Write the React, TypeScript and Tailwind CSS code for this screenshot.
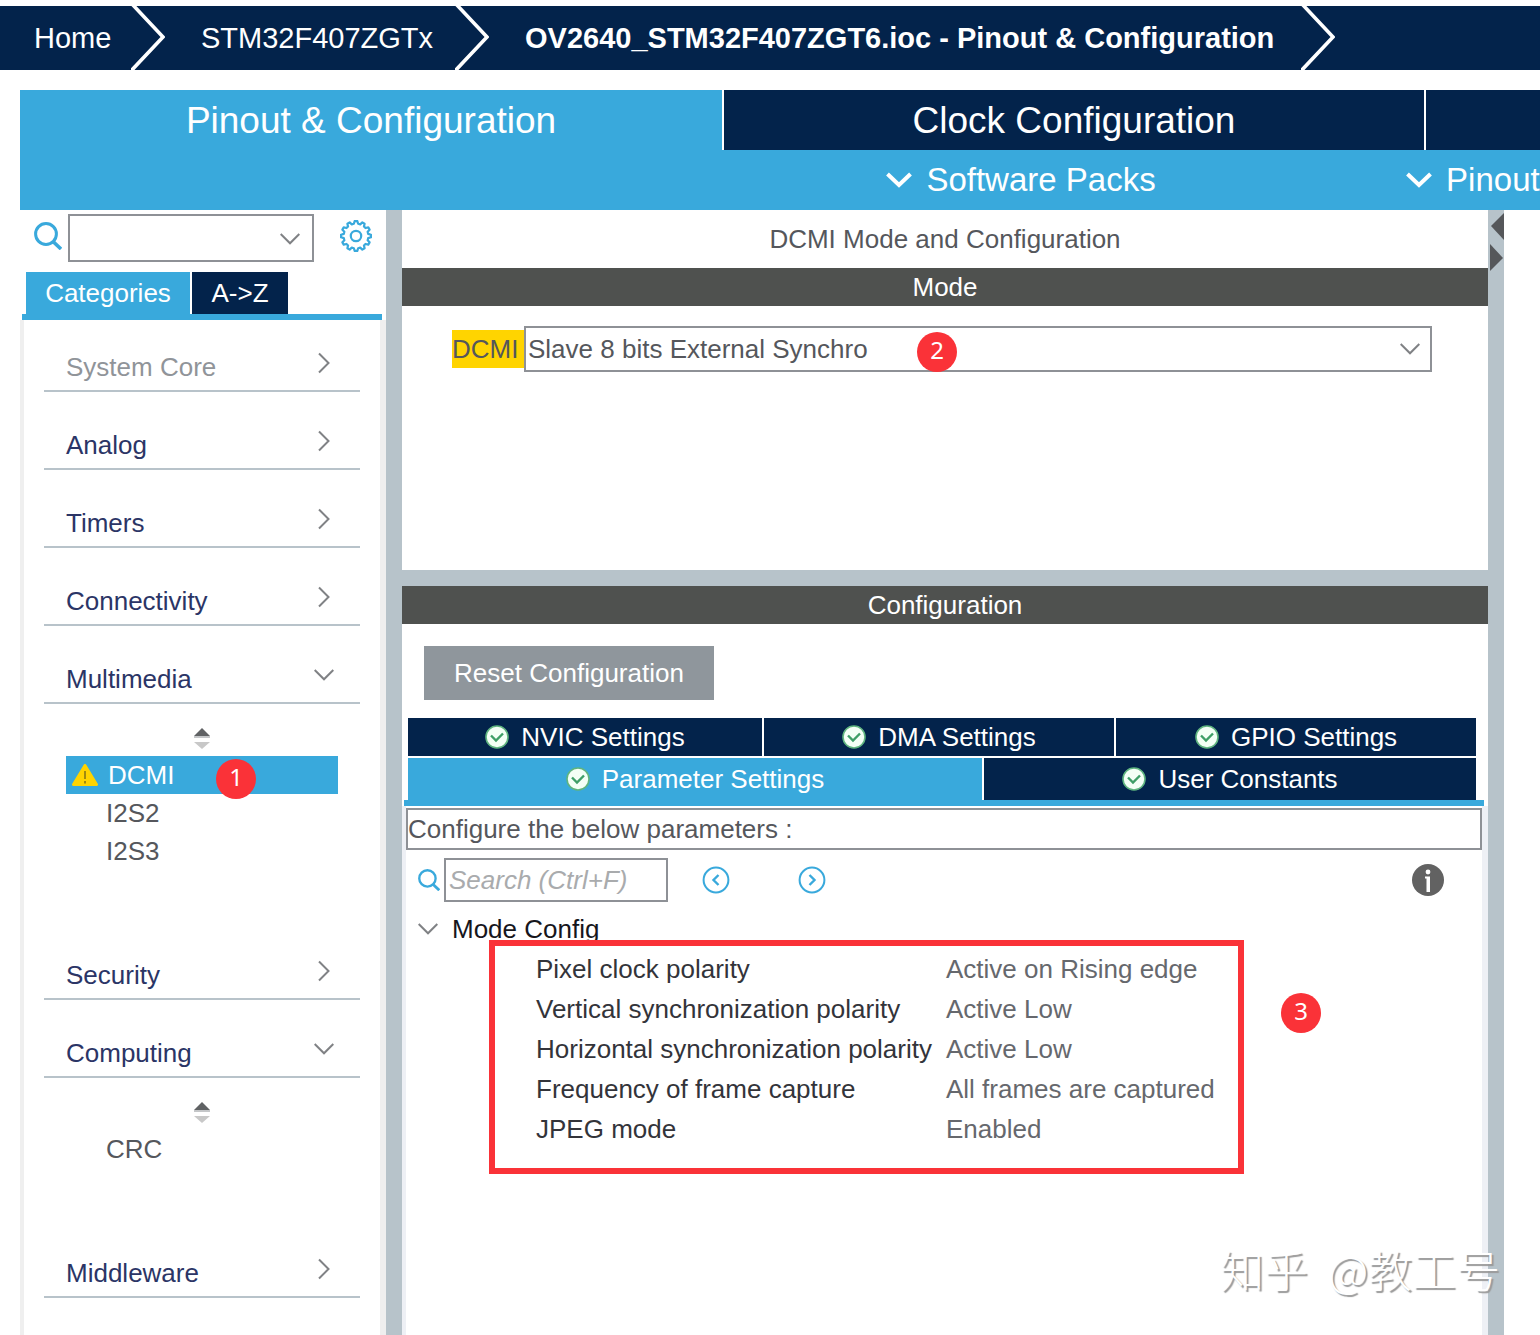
import type { ReactNode } from "react";

const categories = [
    { name: "System Core", open: false, muted: true, items: [] },
    { name: "Analog", open: false, muted: false, items: [] },
    { name: "Timers", open: false, muted: false, items: [] },
    { name: "Connectivity", open: false, muted: false, items: [] },
    { name: "Multimedia", open: true, muted: false, items: ["DCMI", "I2S2", "I2S3"] },
    { name: "Security", open: false, muted: false, items: [] },
    { name: "Computing", open: true, muted: false, items: ["CRC"] },
    { name: "Middleware", open: false, muted: false, items: [] },
];

const parameters = [
    { name: "Pixel clock polarity", value: "Active on Rising edge" },
    { name: "Vertical synchronization polarity", value: "Active Low" },
    { name: "Horizontal synchronization polarity", value: "Active Low" },
    { name: "Frequency of frame capture", value: "All frames are captured" },
    { name: "JPEG mode", value: "Enabled" },
];

// outline of the settings gear: twelve teeth, four corners each
const gearPoints = Array.from({ length: 48 }, (_, i) => {
    const tooth = Math.floor(i / 4);
    const corner = i % 4;
    const angle = ((tooth * 30 + [-10, -5, 5, 10][corner] - 90) * Math.PI) / 180;
    const radius = corner === 1 || corner === 2 ? 15 : 12.4;
    return `${(16 + radius * Math.cos(angle)).toFixed(2)},${(16 + radius * Math.sin(angle)).toFixed(2)}`;
}).join(" ");

/* ---------- Icons ---------- */

function CrumbArrow() {
    return (
        <svg className="w-[34px] h-16 shrink-0" viewBox="0 0 34 64" fill="none" stroke="#fff" strokeWidth="3.6">
            <path d="M1 -2 L32 31 L0 65" />
        </svg>
    );
}

function ChevronDown({ className = "" }: { className?: string }) {
    return (
        <svg className={`w-5 h-3 shrink-0 ${className}`} viewBox="0 0 20 12" fill="none" stroke="#808285" strokeWidth="2">
            <path d="M0.7 1 L10 10.3 L19.3 1" />
        </svg>
    );
}

function ChevronRight() {
    return (
        <svg className="w-3 h-[22px] shrink-0" viewBox="0 0 12 22" fill="none" stroke="#808285" strokeWidth="2">
            <path d="M1 1.5 L10.5 11 L1 20.5" />
        </svg>
    );
}

function MenuChevron() {
    return (
        <svg className="w-[26px] h-4 shrink-0" viewBox="0 0 26 16" fill="none" stroke="#fff" strokeWidth="4">
            <path d="M1.5 2 L13 13 L24.5 2" />
        </svg>
    );
}

function SearchIcon({ className }: { className: string }) {
    return (
        <svg className={className} viewBox="0 0 28 28" fill="none" stroke="#39a9dc" strokeWidth="3">
            <circle cx="12" cy="12" r="10.4" />
            <path d="M19 19.5 L27 27" strokeWidth="3.6" />
        </svg>
    );
}

function GearIcon() {
    return (
        <svg className="w-8 h-8" viewBox="0 0 32 32" fill="none" stroke="#39a9dc" strokeWidth="2.2" strokeLinejoin="round">
            <polygon points={gearPoints} />
            <circle cx="16" cy="16" r="5.2" />
        </svg>
    );
}

function CheckIcon() {
    return (
        <svg className="w-6 h-6 shrink-0" viewBox="0 0 24 24" fill="none">
            <circle cx="12" cy="12" r="11" fill="#f4fff6" stroke="#5fb47f" strokeWidth="1.6" />
            <path d="M6 10.5 L11 15.5 L18 8.5" stroke="#3f9e67" strokeWidth="2.4" />
        </svg>
    );
}

function WarningIcon() {
    return (
        <svg className="w-[26px] h-[22px] shrink-0" viewBox="0 0 26 22">
            <path d="M13 1.5 L24.5 20.5 H1.5 Z" fill="#ffd400" stroke="#ffd400" strokeWidth="3" strokeLinejoin="round" />
            <path d="M13 7 V15 M13 17 V19.5" stroke="#a08a10" strokeWidth="2" />
        </svg>
    );
}

function SortArrows() {
    return (
        <svg className="w-4 h-[22px]" viewBox="0 0 16 22">
            <path d="M8 0 L16 8 H0 Z" fill="#606264" />
            <path d="M0 8 H16 V10 H0 Z" fill="#c4c6c8" />
            <path d="M0 14 H16 L8 21 Z" fill="#c8c8c8" />
        </svg>
    );
}

function CircleArrow({ d }: { d: string }) {
    return (
        <svg className="w-7 h-7" viewBox="0 0 28 28" fill="none" stroke="#39a9dc" strokeWidth="2">
            <circle cx="14" cy="14" r="12.4" />
            <path d={d} strokeWidth="2.4" />
        </svg>
    );
}

function InfoIcon() {
    return (
        <svg className="w-8 h-8" viewBox="0 0 32 32">
            <circle cx="16" cy="16" r="16" fill="#626262" />
            <circle cx="16" cy="8" r="2.4" fill="#fff" />
            <path d="M13 12.5 H18 V28 H14.5 V14.5 H13 Z" fill="#fff" />
        </svg>
    );
}

/* ---------- Small pieces ---------- */

function Badge({ className, children }: { className: string; children: ReactNode }) {
    return (
        <span
            className={`absolute w-10 h-10 rounded-full bg-[#fa3238] text-white text-center text-2xl leading-9 font-['Noto_Sans',sans-serif] ${className}`}
        >
            {children}
        </span>
    );
}

function PanelBar({ children }: { children: ReactNode }) {
    return <h2 className="h-[38px] bg-[#4f514f] text-white text-center leading-[38px]">{children}</h2>;
}

function SettingsTab({ label, active = false }: { label: string; active?: boolean }) {
    return (
        <button
            role="tab"
            aria-selected={active}
            className={`flex items-center justify-center gap-3 text-white ${active ? "bg-[#39a9dc]" : "bg-[#03234b]"}`}
        >
            <CheckIcon />
            {label}
        </button>
    );
}

/* ---------- Page parts ---------- */

function Breadcrumb() {
    return (
        <nav className="mt-1.5 flex h-16 items-center overflow-hidden whitespace-nowrap bg-[#03234b] text-[29px] text-white">
            <a href="#home" className="w-[131px] shrink-0 pl-[34px]">Home</a>
            <CrumbArrow />
            <a href="#mcu" className="w-[290px] shrink-0 pl-9">STM32F407ZGTx</a>
            <CrumbArrow />
            <a href="#ioc" className="w-[812px] shrink-0 pl-9 font-bold">OV2640_STM32F407ZGT6.ioc - Pinout &amp; Configuration</a>
            <CrumbArrow />
        </nav>
    );
}

function TopTabs() {
    return (
        <div className="mt-5 ml-5">
            <div className="grid h-[60px] grid-cols-[702fr_700fr_114fr] gap-0.5 text-[37px] text-white" role="tablist">
                <button role="tab" aria-selected="true" className="bg-[#39a9dc] pt-0.5">Pinout &amp; Configuration</button>
                <button role="tab" aria-selected="false" className="bg-[#03234b] pt-0.5">Clock Configuration</button>
                <button role="tab" aria-selected="false" aria-label="Project Manager" className="bg-[#03234b]" />
            </div>
            <div className="grid h-[60px] grid-cols-[520fr_134fr] overflow-hidden bg-[#39a9dc] pl-[57%] text-[33px] text-white">
                <button className="flex items-center gap-3.5 whitespace-nowrap">
                    <MenuChevron />
                    Software Packs
                </button>
                <button className="flex min-w-0 items-center gap-3.5 whitespace-nowrap">
                    <MenuChevron />
                    Pinout
                </button>
            </div>
        </div>
    );
}

function Sidebar() {
    return (
        <aside className="flex w-[366px] shrink-0 flex-col">
            <div className="mt-1 flex h-12 items-center pl-3.5">
                <SearchIcon className="mb-1 w-7 h-7" />
                <div className="relative ml-1.5 h-12 w-[246px]">
                    <select aria-label="Search peripheral" className="h-full w-full appearance-none border-2 border-[#8e9196] bg-white" />
                    <ChevronDown className="pointer-events-none absolute right-3.5 top-[19px]" />
                </div>
                <button aria-label="Settings" className="mb-1 ml-[26px]">
                    <GearIcon />
                </button>
            </div>

            <div className="mt-2.5 flex h-[42px] gap-0.5 pl-1.5 text-white" role="tablist">
                <button role="tab" aria-selected="true" className="w-[164px] bg-[#39a9dc]">Categories</button>
                <button role="tab" aria-selected="false" className="w-24 bg-[#03234b]">A-&gt;Z</button>
            </div>
            <div className="ml-0.5 mr-1 h-1.5 bg-[#39a9dc]" />

            <div className="flex-1 border-l-4 border-r-6 border-[#efefef] pt-6 pl-5 pr-5">
                {categories.map((cat) => (
                    <section key={cat.name}>
                        <button
                            aria-expanded={cat.open}
                            className="flex h-12 w-full items-center justify-between border-b-2 border-[#b8c3ca] pl-[22px] pr-[25px] text-left"
                        >
                            <span className={cat.muted ? "text-[#909499]" : "text-[#2b3566]"}>{cat.name}</span>
                            <span className="flex w-[22px] justify-center pb-2">{cat.open ? <ChevronDown /> : <ChevronRight />}</span>
                        </button>
                        {cat.items.length > 0 && (
                            <div className="pt-6 pb-[52px]">
                                <div className="flex h-7 justify-center">
                                    <SortArrows />
                                </div>
                                <ul className="ml-[22px] mr-[22px]">
                                    {cat.items.map((item) =>
                                        item === "DCMI" ? (
                                            <li key={item} className="relative flex h-[38px] items-center gap-2.5 bg-[#39a9dc] pl-1.5 text-white">
                                                <WarningIcon />
                                                {item}
                                                <Badge className="left-[150px] top-[3px]">1</Badge>
                                            </li>
                                        ) : (
                                            <li key={item} className="h-[38px] pl-10 leading-[38px] text-[#55575c]">{item}</li>
                                        )
                                    )}
                                </ul>
                            </div>
                        )}
                        <div className="h-[30px]" />
                    </section>
                ))}
            </div>
        </aside>
    );
}

function ModePanel() {
    return (
        <section className="h-[360px]">
            <h1 className="h-[58px] text-center leading-[58px] text-[#55575c]">DCMI Mode and Configuration</h1>
            <PanelBar>Mode</PanelBar>
            <div className="mt-5 ml-[50px] mr-14 flex items-center text-[#55575c]">
                <label htmlFor="dcmi-mode" className="h-[38px] w-[72px] bg-[#ffd400] leading-[38px]">DCMI</label>
                <div className="relative flex-1">
                    <select id="dcmi-mode" className="h-[46px] w-full appearance-none border-2 border-[#8e9196] bg-white pl-0.5">
                        <option>Slave 8 bits External Synchro</option>
                    </select>
                    <ChevronDown className="pointer-events-none absolute right-3 top-[17px]" />
                    <Badge className="left-[393px] top-1.5">2</Badge>
                </div>
            </div>
        </section>
    );
}

function ConfigPanel() {
    return (
        <section className="relative flex flex-1 flex-col">
            <PanelBar>Configuration</PanelBar>
            <button className="mt-[22px] ml-[22px] h-[54px] w-[290px] bg-[#8f969c] text-white">Reset Configuration</button>

            <div className="mt-[18px] ml-1.5 mr-3 flex flex-col gap-0.5" role="tablist">
                <div className="grid h-[38px] grid-cols-[354fr_350fr_360fr] gap-0.5">
                    <SettingsTab label="NVIC Settings" />
                    <SettingsTab label="DMA Settings" />
                    <SettingsTab label="GPIO Settings" />
                </div>
                <div className="grid h-[42px] grid-cols-[574fr_492fr] gap-0.5">
                    <SettingsTab label="Parameter Settings" active />
                    <SettingsTab label="User Constants" />
                </div>
            </div>
            <div className="ml-0.5 mr-1 h-1.5 bg-[#39a9dc]" />

            <div className="flex-1 border-l-4 border-r-6 border-[#eef0f5] pt-0.5">
                <p className="h-[42px] border-2 border-[#8e9196] leading-[38px] text-[#55575c]">Configure the below parameters :</p>

                <div className="mt-2 flex h-11 items-center pl-3 pr-[38px]">
                    <SearchIcon className="w-[22px] h-[22px]" />
                    <input
                        type="text"
                        aria-label="Search parameters"
                        placeholder="Search (Ctrl+F)"
                        className="ml-1 h-11 w-56 border-2 border-[#8e9196] pl-[3px] italic placeholder:text-[#a9abad]"
                    />
                    <button aria-label="Previous match" className="ml-[34px]">
                        <CircleArrow d="M16.5 9 L11.5 14 L16.5 19" />
                    </button>
                    <button aria-label="Next match" className="ml-[68px]">
                        <CircleArrow d="M11.5 9 L16.5 14 L11.5 19" />
                    </button>
                    <button aria-label="Information" className="ml-auto">
                        <InfoIcon />
                    </button>
                </div>

                <button className="mt-[7px] flex h-[31px] items-center gap-3.5 pl-3 pt-2 leading-10 text-[#16161c]">
                    <ChevronDown />
                    Mode Config
                </button>

                <div className="relative ml-[83px] w-[755px] border-6 border-[#fa3238] pt-[3px] pb-[19px] pl-[41px]">
                    <table className="w-full table-fixed text-left">
                        <tbody>
                            {parameters.map((p) => (
                                <tr key={p.name} className="h-10">
                                    <th scope="row" className="w-[410px] whitespace-nowrap font-normal text-[#33343a]">{p.name}</th>
                                    <td className="whitespace-nowrap text-[#66686d]">{p.value}</td>
                                </tr>
                            ))}
                        </tbody>
                    </table>
                    <Badge className="left-full top-[47px] ml-[43px]">3</Badge>
                </div>
            </div>

            {/* Watermark */}
            <p className="absolute -right-3 bottom-9 flex gap-5 whitespace-nowrap font-['Noto_Sans_CJK_SC',sans-serif] text-[44px] font-light leading-[60px] text-white [text-shadow:2px_2px_1px_#999]">
                <span>知乎</span>
                <span>@教工号</span>
            </p>
        </section>
    );
}

export default function App() {
    return (
        <div className="flex min-h-screen flex-col overflow-hidden bg-white font-['Liberation_Sans',Arial,sans-serif] text-[26px] leading-8">
            <Breadcrumb />
            <TopTabs />
            <div className="flex flex-1 pl-5 pr-9">
                <Sidebar />
                <div className="w-4 shrink-0 bg-[#b7c3ca]" />
                <main className="flex min-w-0 flex-1 flex-col">
                    <ModePanel />
                    <div className="h-4 bg-[#b7c3ca]" />
                    <ConfigPanel />
                </main>
                <div className="w-4 shrink-0 bg-[#b7c3ca] pt-[3px]">
                    <svg className="w-4 h-[60px]" viewBox="0 0 16 60" fill="#55575a">
                        <path d="M16 0 V27 L3 13 Z" />
                        <path d="M2 31 V58 L15 45 Z" />
                    </svg>
                </div>
            </div>
        </div>
    );
}
